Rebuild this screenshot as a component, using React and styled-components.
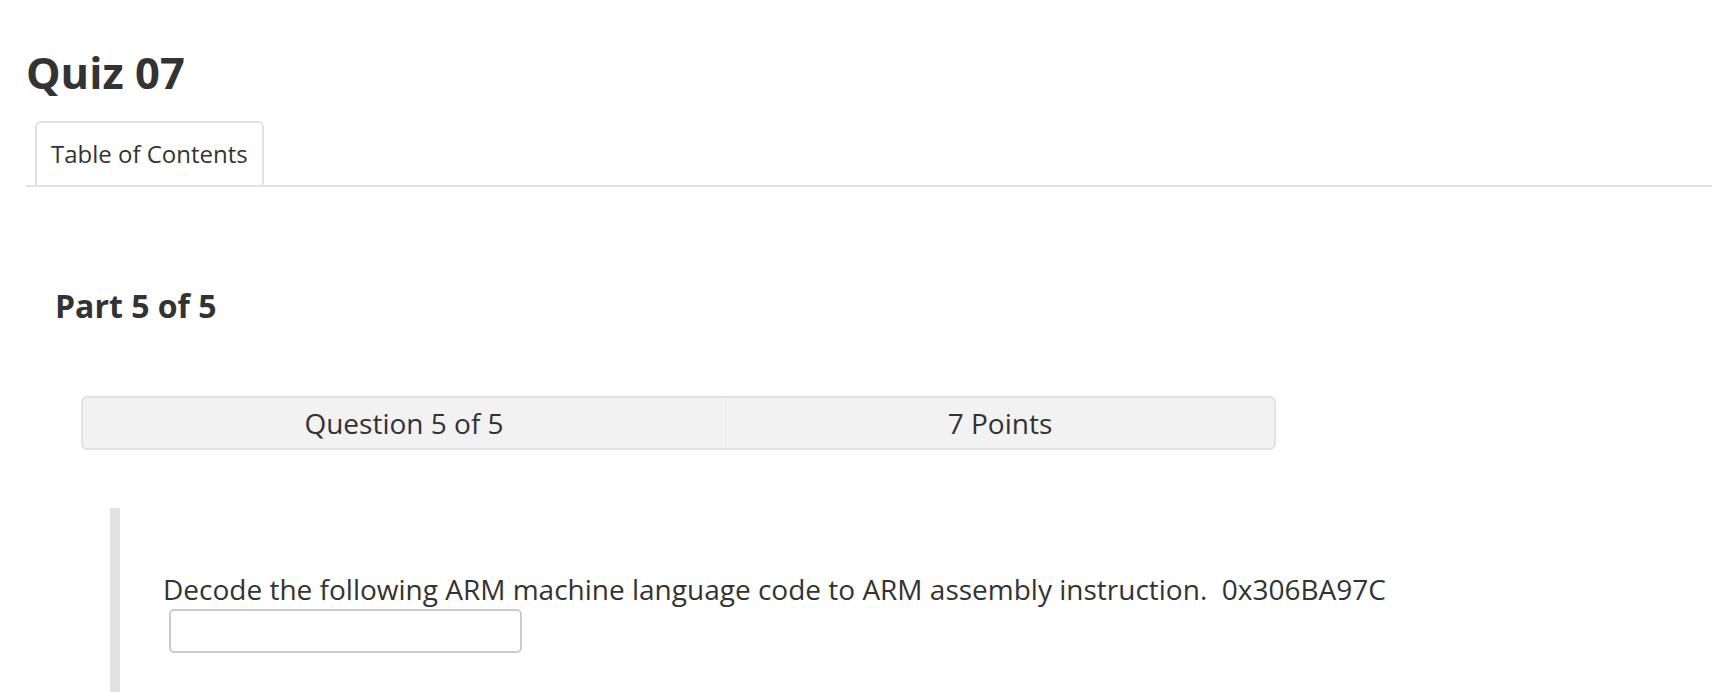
import React from "react";
import styled, { createGlobalStyle } from "styled-components";

const GlobalStyle = createGlobalStyle`
  html, body {
    margin: 0;
    padding: 0;
    background: #ffffff;
    overflow: hidden;
  }
  body {
    font-family: "Open Sans", "Liberation Sans", sans-serif;
    color: #333333;
  }
`;

const App = () => {
  return (
    <>
      <GlobalStyle />
      <Page>
        <Title>Quiz 07</Title>
        <TabList>
          <Tab>Table of Contents</Tab>
        </TabList>
        <Section>
          <PartTitle>Part 5 of 5</PartTitle>
          <QuestionHeader>
            <tbody>
              <tr>
                <HeaderCell $width="642px">Question 5 of 5</HeaderCell>
                <HeaderCell>7 Points</HeaderCell>
              </tr>
            </tbody>
          </QuestionHeader>
          <QuestionBody>
            <Prompt>
              Decode the following ARM machine language code to ARM assembly
              instruction.&nbsp; 0x306BA97C
            </Prompt>
            <AnswerInput type="text" />
          </QuestionBody>
        </Section>
      </Page>
    </>
  );
};

export default App;

const Page = styled.div`
  padding: 47px 0 0 26px;
`;

const Title = styled.h1`
  margin: 0;
  font-size: 43.5px;
  line-height: 52px;
  font-weight: 700;
  color: #333333;
`;

const TabList = styled.div`
  display: flex;
  margin-top: 22px;
  padding-left: 9px;
  border-bottom: 2px solid #e2e2e2;
`;

const Tab = styled.div`
  padding: 13px 14px;
  font-size: 24px;
  line-height: 36px;
  color: #333333;
  background: #ffffff;
  border: 2px solid #e2e2e2;
  border-bottom: none;
  border-radius: 6px 6px 0 0;
`;

const Section = styled.div`
  padding: 99px 0 0 29px;
`;

const PartTitle = styled.h2`
  margin: 0;
  font-size: 32px;
  line-height: 40px;
  font-weight: 700;
  color: #333333;
`;

const QuestionHeader = styled.table`
  margin: 70px 0 0 26px;
  width: 1195px;
  border-collapse: separate;
  border-spacing: 0;
  background: #f2f2f2;
  border: 2px solid #e2e2e2;
  border-radius: 6px;
`;

const HeaderCell = styled.td`
  width: ${(p) => p.$width || "auto"};
  padding: 6px 0;
  font-size: 28px;
  line-height: 38px;
  text-align: center;
  color: #333333;

  & + & {
    border-left: 1px solid #e9e9e9;
  }
`;

const QuestionBody = styled.div`
  margin: 58px 0 0 55px;
  padding: 61px 0 60px 43px;
  border-left: 10px solid #e2e2e2;
  min-height: 200px;
`;

const Prompt = styled.div`
  font-size: 28px;
  line-height: 40px;
  color: #333333;
`;

const AnswerInput = styled.input`
  display: block;
  box-sizing: border-box;
  margin-left: 6px;
  width: 353px;
  height: 44px;
  border: 2px solid #cccccc;
  border-radius: 5px;
  background: #ffffff;
  font-family: "Open Sans", "Liberation Sans", sans-serif;
  font-size: 24px;
  outline: none;
`;
